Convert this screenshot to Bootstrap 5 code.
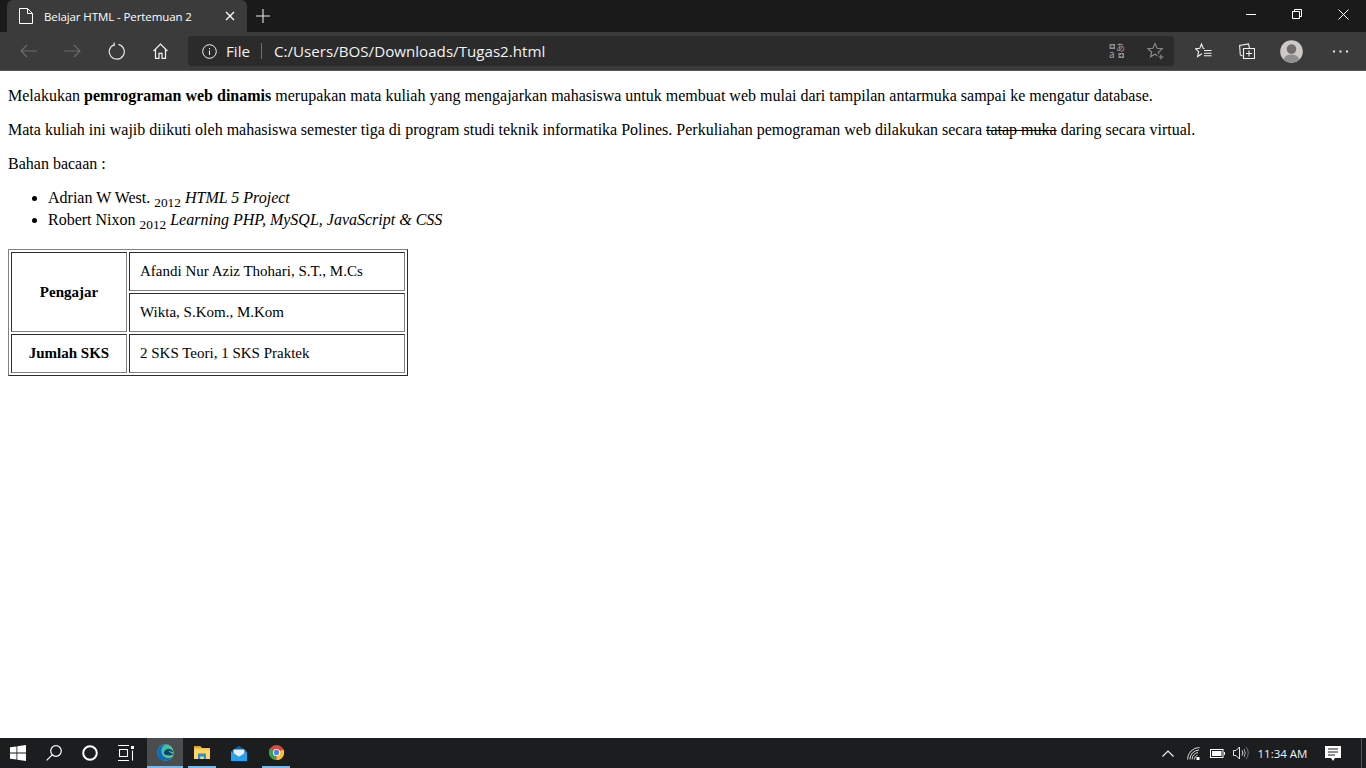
<!DOCTYPE html>
<html lang="id">
<head>
<meta charset="utf-8">
<title>Belajar HTML - Pertemuan 2</title>
<link href="https://cdn.jsdelivr.net/npm/bootstrap@5.3.0/dist/css/bootstrap.min.css" rel="stylesheet">
<style>
html,body{height:100%;overflow:hidden}
body{background:#fff;font-family:"Liberation Serif",serif;font-size:16px;line-height:normal;color:#000}
.ui{font-family:"Open Sans","Noto Sans",sans-serif}
.tabstrip{height:32px;background:#1a1a1a;padding-left:7px}
.tabitem{width:240px;height:32px;background:#3b3b3b;border-radius:6px 6px 0 0;padding-left:12px;padding-right:0;color:#fff;font-size:11.5px;letter-spacing:-.1px}
.tabtitle{margin-left:11px;flex:1;white-space:nowrap}
.tabclose{width:24px;margin-right:5px}
.newtab{margin-left:4px;width:24px}
.winbtn{width:46px;height:32px;padding-bottom:4px}
.toolbar{height:38px;background:#3b3b3b;padding-left:6px}
.toolbtn{width:44px;height:30px;flex:none}
.addrbtn{width:38px;height:30px;flex:none}
.addr{margin-left:6px;margin-right:7px;width:986px;height:30px;background:#2b2b2b;border-radius:4px;color:#f2f2f2;font-size:15.15px;padding-left:14px;flex:none}
.filelbl{margin-left:9px}
.addrsep{width:1px;height:16px;background:#6e6e6e;margin:0 12px 0 11px}
.url{white-space:nowrap}
.pagearea{flex:1;padding:16px 8px 0;border-top:1px solid #555;min-height:0}
.pagearea p{margin:0 0 16px}
.pagearea ul{margin:0 0 16px;padding-left:40px}
.pagearea sub{font-size:smaller;vertical-align:sub;position:static;line-height:normal}
.pagearea strong{font-weight:700}
.pagetable{border-collapse:separate;border-spacing:2px;border:1px outset #808080;width:400px;font-size:15px}
.pagetable th,.pagetable td{border:1px inset #808080;padding:10px;font-weight:400}
.pagetable th{font-weight:700;text-align:center;width:116px}
.taskbar{height:30px;background:#1b1d1f;color:#fff;font-size:11.5px;flex:none}
.tbtn{width:36px;height:30px;flex:none}
.tactive{background:#4a4c4e;border-bottom:2px solid #76b9ed;margin-left:3px}
.trun{width:28px;border-bottom:2px solid #76b9ed}
.trunfile{margin-left:5px;margin-right:4px}
.trunmail{margin-left:1px}
.trunchrome{margin-left:5px}
.tray{width:24px;height:30px;flex:none}
.traywifi{margin-left:1px}
.clock{width:59px;text-align:center;color:#f2f2f2;white-space:nowrap}
.traynote{margin-left:9px}
.showdesk{width:1px;height:30px;background:#555;margin-left:16px;margin-right:4px}
svg{display:block}
.glyph{font-family:"Noto Sans CJK JP","Liberation Sans",sans-serif;fill:#a0a0a0}
.transicon{overflow:visible}
</style>
</head>
<body class="d-flex flex-column">
<header class="ui flex-none">
  <div class="tabstrip d-flex align-items-end">
    <div class="tabitem d-flex align-items-center">
      <svg width="14" height="16" viewBox="0 0 14 16" fill="none" stroke="#fff" stroke-width="1"><path d="M.5.5h8l5 5v10H.5zM8.500.5v5h5"/></svg>
      <span class="tabtitle">Belajar HTML - Pertemuan 2</span>
      <span class="tabclose d-flex justify-content-center"><svg width="10" height="10" viewBox="0 0 10 10" stroke="#fff" stroke-width="1.3"><path d="M1 1l8 8M9 1l-8 8"/></svg></span>
    </div>
    <div class="newtab d-flex align-self-center justify-content-center"><svg width="14" height="14" viewBox="0 0 14 14" stroke="#e6e6e6" stroke-width="1.1"><path d="M7 0v14M0 7h14"/></svg></div>
    <div class="ms-auto d-flex">
      <div class="winbtn d-flex align-items-center justify-content-center"><svg width="10" height="10" viewBox="0 0 10 10" stroke="#fff"><path d="M0 5.500h10"/></svg></div>
      <div class="winbtn d-flex align-items-center justify-content-center"><svg width="10" height="10" viewBox="0 0 10 10" fill="none" stroke="#fff"><path d="M.5 2.500h7v7h-7zM2.500 2.500v-2h7v7h-2"/></svg></div>
      <div class="winbtn d-flex align-items-center justify-content-center"><svg width="11" height="11" viewBox="0 0 11 11" stroke="#fff"><path d="M.5.5l10 10M10.500.5l-10 10"/></svg></div>
    </div>
  </div>
  <div class="toolbar d-flex align-items-center">
    <div class="toolbtn d-flex align-items-center justify-content-center"><svg width="17" height="14" viewBox="0 0 17 14" fill="none" stroke="#6d6d6d" stroke-width="1.1"><path d="M17 7H1M7 1L1 7l6 6"/></svg></div>
    <div class="toolbtn d-flex align-items-center justify-content-center"><svg width="17" height="14" viewBox="0 0 17 14" fill="none" stroke="#6d6d6d" stroke-width="1.1"><path d="M0 7h16M10 1l6 6-6 6"/></svg></div>
    <div class="toolbtn d-flex align-items-center justify-content-center"><svg width="17" height="18" viewBox="0 0 17 18" fill="none" stroke="#e6e6e6" stroke-width="1.2"><path d="M5.800 2.800A7.500 7.500 0 1 0 10.500 2.400M6 .5l.4 2.700-3 1"/></svg></div>
    <div class="toolbtn d-flex align-items-center justify-content-center"><svg width="15" height="16" viewBox="0 0 15 16" fill="none" stroke="#f2f2f2" stroke-width="1.2"><path d="M.6 8L7.500 1l6.900 7M2.500 6.500v8.900h3.500v-5h3v5h3.500V6.500"/></svg></div>
    <div class="addr d-flex align-items-center">
      <svg width="15" height="15" viewBox="0 0 15 15" fill="none" stroke="#f2f2f2"><circle cx="7.500" cy="7.500" r="6.800"/><path d="M7.500 6.500v4.500M7.500 4v1.300"/></svg>
      <span class="filelbl">File</span><span class="addrsep"></span><span class="url">C:/Users/BOS/Downloads/Tugas2.html</span>
      <div class="ms-auto d-flex align-items-center">
        <div class="addrbtn d-flex align-items-center justify-content-center"><svg class="transicon" width="16" height="16" viewBox="0 0 16 16" fill="none"><text x="7" y="8" font-size="9" class="glyph">あ</text><text x="0" y="15" font-size="10" class="glyph">a</text><path d="M.5 1h5.500v5H.5z" fill="#8d8d8d"/><path d="M5 3.500H2.500M3.500 2L2 3.500 3.500 5" stroke="#2b2b2b"/><path d="M9.500 10H15v5H9.500z" fill="#8d8d8d"/><path d="M10.500 12.500H13M12 11l1.500 1.500L12 14" stroke="#2b2b2b"/></svg></div>
        <div class="addrbtn d-flex align-items-center justify-content-center"><svg width="17" height="18" viewBox="0 0 17 18" fill="none" stroke="#8d8d8d" stroke-width="1.100"><path d="M8 1.500l2.100 4.800 5.200.5-3.900 3.500 1.200 4.500L8 12.200l-4.500 2.600 1.200-4.800L.8 6.800l5.100-.5z"/><rect x="10.500" y="12" width="6.500" height="6" fill="#2b2b2b" stroke="none"/><path d="M11.500 15h5M14 12.500v5"/></svg></div>
      </div>
    </div>
    <div class="toolbtn d-flex align-items-center justify-content-center"><svg width="17" height="16" viewBox="0 0 17 16" fill="none" stroke="#f2f2f2" stroke-width="1.100"><path d="M9.500 5.500L8.200 5.300 6.500 1 4.800 5.300.6 5.700l3 2.900-1 4.900 4.400-2.700M9 7.500h7.500M9 10.200h7.500M9 12.800h7.500"/></svg></div>
    <div class="toolbtn d-flex align-items-center justify-content-center"><svg width="16" height="16" viewBox="0 0 16 16" fill="none" stroke="#f2f2f2" stroke-width="1.100"><path d="M3.500 13L1.300 12 .6 2.500 9.500 1l1 4M4.500 5.500h11v10h-11zM10 7.500v6M7 10.500h6"/></svg></div>
    <div class="toolbtn d-flex align-items-center justify-content-center"><svg width="23" height="23" viewBox="0 0 24 24"><circle cx="12" cy="12" r="11.800" fill="#cdc9c4"/><circle cx="12" cy="9.500" r="5" fill="#6f6f6f"/><path d="M3.800 20c1.500-3.500 4.500-4.800 8.200-4.800s6.700 1.300 8.200 4.800a11.500 11.500 0 0 1-16.400 0z" fill="#8f8f8f"/></svg></div>
    <div class="toolbtn d-flex align-items-center justify-content-center ms-auto me-1"><svg width="15" height="3" viewBox="0 0 15 3" fill="#e6e6e6"><rect x="0" y="0.500" width="2" height="2"/><rect x="6.500" y="0.500" width="2" height="2"/><rect x="13" y="0.500" width="2" height="2"/></svg></div>
  </div>
</header>
<main class="pagearea">
  <p>Melakukan <strong>pemrograman web dinamis</strong> merupakan mata kuliah yang mengajarkan mahasiswa untuk membuat web mulai dari tampilan antarmuka sampai ke mengatur database.</p>
  <p>Mata kuliah ini wajib diikuti oleh mahasiswa semester tiga di program studi teknik informatika Polines. Perkuliahan pemograman web dilakukan secara <s>tatap muka</s> daring secara virtual.</p>
  <p>Bahan bacaan :</p>
  <ul>
    <li>Adrian W West. <sub>2012</sub> <em>HTML 5 Project</em></li>
    <li>Robert Nixon <sub>2012</sub> <em>Learning PHP, MySQL, JavaScript &amp; CSS</em></li>
  </ul>
  <table class="pagetable">
    <tr><th rowspan="2">Pengajar</th><td>Afandi Nur Aziz Thohari, S.T., M.Cs</td></tr>
    <tr><td>Wikta, S.Kom., M.Kom</td></tr>
    <tr><th>Jumlah SKS</th><td>2 SKS Teori, 1 SKS Praktek</td></tr>
  </table>
</main>
<footer class="taskbar ui d-flex align-items-stretch">
  <div class="tbtn d-flex align-items-center justify-content-center"><svg width="16" height="16" viewBox="0 0 16 16" fill="#fff"><path d="M0 2.300l6.500-.9v6.200H0zM7.300 1.300L16 0v7.600H7.300zM0 8.400h6.500v6.200L0 13.700zM7.300 8.400H16V16l-8.700-1.300z"/></svg></div>
  <div class="tbtn d-flex align-items-center justify-content-center"><svg width="16" height="16" viewBox="0 0 16 16" fill="none" stroke="#fff" stroke-width="1.200"><circle cx="10" cy="6" r="5.300"/><path d="M6.200 9.800L.6 15.400"/></svg></div>
  <div class="tbtn d-flex align-items-center justify-content-center"><svg width="16" height="16" viewBox="0 0 16 16" fill="none" stroke="#fff" stroke-width="2"><circle cx="8" cy="8" r="6.800"/></svg></div>
  <div class="tbtn d-flex align-items-center justify-content-center"><svg width="16" height="16" viewBox="0 0 16 16" fill="none" stroke="#fff" stroke-width="1.100"><path d="M0 .5h11M0 15.500h11M1.500 4.500h8v7h-8zM14.500 5.500v10"/><rect x="13" y="1" width="3" height="3" fill="#fff" stroke="none"/></svg></div>
  <div class="tbtn tactive d-flex align-items-center justify-content-center"><svg width="17" height="17" viewBox="0 0 17 17"><defs><linearGradient id="eg" x1="0" y1="0" x2="1" y2="1"><stop offset="0" stop-color="#1fb6d8"/><stop offset="1" stop-color="#7ed35a"/></linearGradient></defs><circle cx="8.500" cy="8.500" r="8.300" fill="url(#eg)"/><path d="M.3 9C.5 3.500 5 .8 8.500.8 5 2 3.500 6 5 10c1.400 3.500 6 5 10 3-2 2.600-4.200 3.700-6.500 3.700C4 16.700.3 13.500.3 9z" fill="#0c6cc0"/><path d="M7 9.500c-.3-3 3-5 5.500-4.600 2.500.4 3.800 2.300 3.900 4.300 0 1.300-1.600 2.300-3.900 2.300-2.800 0-5.200-.7-5.500-2z" fill="#0f3f78"/><path d="M11 7.500c2-.8 4.500-.3 5.400 1.700l-.1 1.300C14.500 9 13 8 11 7.500z" fill="#5fd06a"/></svg></div>
  <div class="tbtn trun trunfile d-flex align-items-center justify-content-center"><svg width="16" height="15" viewBox="0 0 16 15"><path d="M0 1h6l2 2h8v11H0z" fill="#f0c24b"/><path d="M0 1h6l1 1.500H0z" fill="#d99b1f"/><path d="M0 4.500h16V14H0z" fill="#ffd767"/><path d="M4 8.500h8V14H9.800v-2.500H6.200V14H4z" fill="#2c8fd6"/></svg></div>
  <div class="tbtn trunmail d-flex align-items-center justify-content-center"><svg width="16" height="15" viewBox="0 0 16 15"><path d="M0 5.500L8 0l8 5.500V15H0z" fill="#0f86d8"/><path d="M0 5.500L8 0l8 5.500L8 11z" fill="#0a5da8"/><path d="M2.500 3.500h11v4L8 11 2.500 7.500z" fill="#e6f2fb"/><path d="M0 5.500L8 11l8-5.500V15H0z" fill="#27a2ec"/></svg></div>
  <div class="tbtn trun trunchrome d-flex align-items-center justify-content-center"><svg width="15" height="15" viewBox="0 0 15 15"><circle cx="7.500" cy="7.500" r="7.500" fill="#de4a3a"/><path d="M7.500 7.500L14.500 4.500A7.500 7.500 0 0 1 7.500 15z" fill="#fbc02d"/><path d="M7.500 7.500l-1 7.400A7.500 7.500 0 0 1 1 3.500z" fill="#35a04f"/><circle cx="7.500" cy="7.500" r="3.600" fill="#fff"/><circle cx="7.500" cy="7.500" r="2.700" fill="#4a86e8"/></svg></div>
  <div class="ms-auto d-flex align-items-center">
    <div class="tray d-flex align-items-center justify-content-center"><svg width="12" height="7" viewBox="0 0 12 7" fill="none" stroke="#f2f2f2" stroke-width="1.200"><path d="M.5 6.500L6 1l5.500 5.500"/></svg></div>
    <div class="tray traywifi d-flex align-items-center justify-content-center"><svg width="13" height="13" viewBox="0 0 13 13" fill="none" stroke="#d8d8d8"><path d="M.5 12.500A12 12 0 0 1 12.500 .5M2.800 12.500A9.700 9.700 0 0 1 12 3M5.100 12.500A7.400 7.400 0 0 1 11 5.500M7.400 12.500A5 5 0 0 1 10.500 8"/><rect x="9.500" y="10" width="3" height="3" fill="#fff" stroke="none"/></svg></div>
    <div class="tray d-flex align-items-center justify-content-center"><svg width="15" height="9" viewBox="0 0 15 9" fill="none" stroke="#fff"><rect x=".5" y=".5" width="12.500" height="8"/><rect x="2" y="2" width="9.500" height="5" fill="#fff" stroke="none"/><path d="M14.500 3v3"/></svg></div>
    <div class="tray d-flex align-items-center justify-content-center"><svg width="16" height="14" viewBox="0 0 16 14" fill="none" stroke="#e6e6e6"><path d="M.5 4.500h2.500L6.500 1v12L3 9.500H.5z"/><path d="M9 4.500a4 4 0 0 1 0 5"/><path d="M11 3a7 7 0 0 1 0 8" stroke="#aaa"/><path d="M13 1a9 9 0 0 1 0 12" stroke="#777"/></svg></div>
    <div class="clock">11:34 AM</div>
    <div class="tray traynote d-flex align-items-center justify-content-center"><svg width="16" height="15" viewBox="0 0 16 15"><path d="M0 0h16v12h-6l-2 3-2-3H0z" fill="#fff"/><path d="M3 3h10M3 6h10M3 9h7" stroke="#1b1d1f"/></svg></div>
    <div class="showdesk"></div>
  </div>
</footer>
<script src="https://cdn.jsdelivr.net/npm/bootstrap@5.3.0/dist/js/bootstrap.bundle.min.js"></script>
</body>
</html>
